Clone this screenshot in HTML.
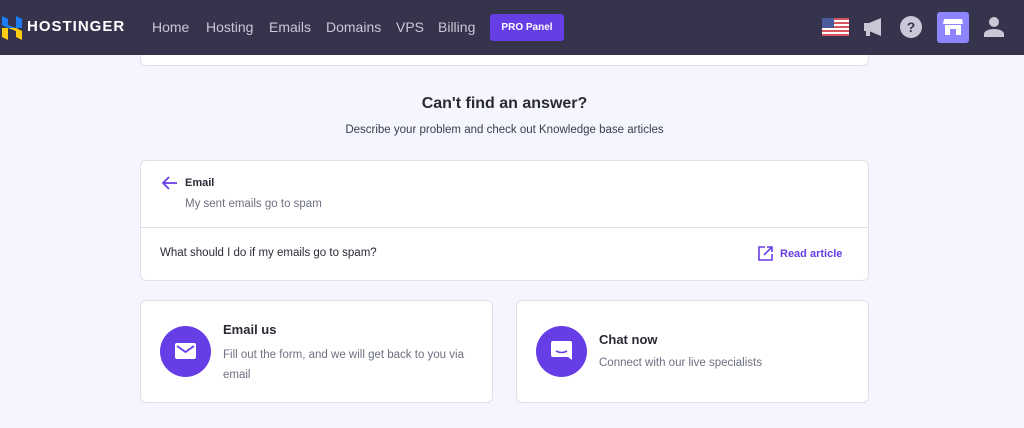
<!DOCTYPE html>
<html><head><meta charset="utf-8"><style>
*{box-sizing:border-box;margin:0;padding:0}
body{width:1024px;height:428px;overflow:hidden;background:#f4f5ff;font-family:"Liberation Sans",sans-serif;position:relative}
.nav{position:absolute;left:0;top:0;width:1024px;height:55px;background:#36344d;z-index:2}
.nav a{position:absolute;top:19px;color:#c9c8d6;font-size:14px}
.card{position:absolute;background:#fff;border:1px solid #e0e0e8;border-radius:6px}
.t{position:absolute;white-space:nowrap}
</style></head><body>
<div class="nav">
<svg style="position:absolute;left:2px;top:16px" width="20" height="24" viewBox="0 0 20 24"><path d="M0 0l6 3v6l8 3V0l6 3v9H6L0 9z" fill="#1b7bf0"/><path d="M0 12h14l6 3v9l-6-3v-6l-8-3v12l-6-3z" fill="#ffcd0f"/></svg>
<div class="t" style="left:27px;top:18px;color:#fff;font-weight:bold;font-size:15px;letter-spacing:1px">HOSTINGER</div>
<a style="left:152px">Home</a><a style="left:206px">Hosting</a><a style="left:269px">Emails</a><a style="left:326px">Domains</a><a style="left:396px">VPS</a><a style="left:438px">Billing</a>
<div style="position:absolute;left:490px;top:14px;width:74px;height:27px;background:#673de6;border-radius:3px;color:#fff;font-size:10px;font-weight:bold;text-align:center;line-height:27px">PRO Panel</div>
<svg style="position:absolute;left:822px;top:18px" width="27" height="18" viewBox="0 0 27 18"><rect width="27" height="18" rx="2" fill="#fff"/><g fill="#d9545a"><rect y="0" width="27" height="2"/><rect y="4" width="27" height="2"/><rect y="8" width="27" height="2"/><rect y="12" width="27" height="2"/><rect y="16" width="27" height="2"/></g><rect width="12" height="10" fill="#4a5a9a"/></svg>
<svg style="position:absolute;left:863px;top:17px" width="22" height="20" viewBox="0 0 22 20"><path d="M1 6h5l12-5v18L6 14H1z" fill="#c9c8d6"/><rect x="3" y="14" width="4" height="5" fill="#c9c8d6"/></svg>
<svg style="position:absolute;left:900px;top:16px" width="22" height="22" viewBox="0 0 22 22"><circle cx="11" cy="11" r="11" fill="#c9c8d6"/><text x="11" y="16" text-anchor="middle" font-family="Liberation Sans" font-weight="bold" font-size="14" fill="#36344d">?</text></svg>
<div style="position:absolute;left:937px;top:12px;width:32px;height:31px;background:#8c85ff;border-radius:3px"><svg style="position:absolute;left:6px;top:6px" width="20" height="18" viewBox="0 0 20 18"><path d="M1 1h18l1 5H0z" fill="#fff"/><path d="M2 7h16v10h-5v-6H7v6H2z" fill="#fff"/></svg></div>
<svg style="position:absolute;left:984px;top:17px" width="20" height="20" viewBox="0 0 20 20"><circle cx="10" cy="5" r="5" fill="#c9c8d6"/><path d="M0 20v-3c0-3 5-5 10-5s10 2 10 5v3z" fill="#c9c8d6"/></svg>
</div>
<div class="card" style="left:140px;top:40px;width:729px;height:26px;border-top:none;border-radius:0 0 6px 6px"></div>
<div class="t" style="left:0;width:1009px;text-align:center;top:95px;font-size:16px;font-weight:bold;color:#2a2a35">Can't find an answer?</div>
<div class="t" style="left:0;width:1009px;text-align:center;top:124px;font-size:11.5px;color:#3b3d4a">Describe your problem and check out Knowledge base articles</div>
<div class="card" style="left:140px;top:160px;width:729px;height:121px">
<div style="position:absolute;left:0;top:66px;width:727px;border-top:1px solid #e0e0e8"></div>
<svg style="position:absolute;left:21px;top:15px" width="16" height="14" viewBox="0 0 16 14"><path d="M15 7H2M7 1L1 7l6 6" stroke="#673de6" stroke-width="1.8" fill="none"/></svg>
<div class="t" style="left:44px;top:16px;font-size:11px;font-weight:bold;color:#2a2a35">Email</div>
<div class="t" style="left:44px;top:37px;font-size:11.5px;color:#6d7081">My sent emails go to spam</div>
<div class="t" style="left:19px;top:86px;font-size:11.5px;color:#2a2a35">What should I do if my emails go to spam?</div>
<svg style="position:absolute;left:617px;top:85px" width="15" height="15" viewBox="0 0 15 15"><path d="M7 1H1v13h13V8M9 1h5v5M14 1L6 9" stroke="#673de6" stroke-width="1.6" fill="none"/></svg>
<div class="t" style="left:639px;top:87px;font-size:11px;font-weight:bold;color:#673de6">Read article</div>
</div>
<div class="card" style="left:140px;top:300px;width:353px;height:103px">
<div style="position:absolute;left:19px;top:25px;width:51px;height:51px;border-radius:50%;background:#673de6"><svg style="position:absolute;left:15px;top:17px" width="21" height="16" viewBox="0 0 21 16"><rect width="21" height="16" rx="2" fill="#fff"/><path d="M2 3l8.5 6L19 3" stroke="#673de6" stroke-width="1.8" fill="none"/></svg></div>
<div class="t" style="left:82px;top:21px;font-size:13px;font-weight:bold;color:#2a2a35">Email us</div>
<div style="position:absolute;left:82px;top:44px;width:245px;font-size:11.5px;line-height:20px;color:#6d7081">Fill out the form, and we will get back to you via email</div>
</div>
<div class="card" style="left:516px;top:300px;width:353px;height:103px">
<div style="position:absolute;left:19px;top:25px;width:51px;height:51px;border-radius:50%;background:#673de6"><svg style="position:absolute;left:15px;top:15px" width="21" height="21" viewBox="0 0 21 21"><path d="M2 0h17a2 2 0 012 2v17l-4-3H2a2 2 0 01-2-2V2a2 2 0 012-2z" fill="#fff"/><path d="M5 10q5.5 3 11 0" stroke="#673de6" stroke-width="1.6" fill="none"/></svg></div>
<div class="t" style="left:82px;top:31px;font-size:13px;font-weight:bold;color:#2a2a35">Chat now</div>
<div class="t" style="left:82px;top:56px;font-size:11.5px;color:#6d7081">Connect with our live specialists</div>
</div>
</body></html>
